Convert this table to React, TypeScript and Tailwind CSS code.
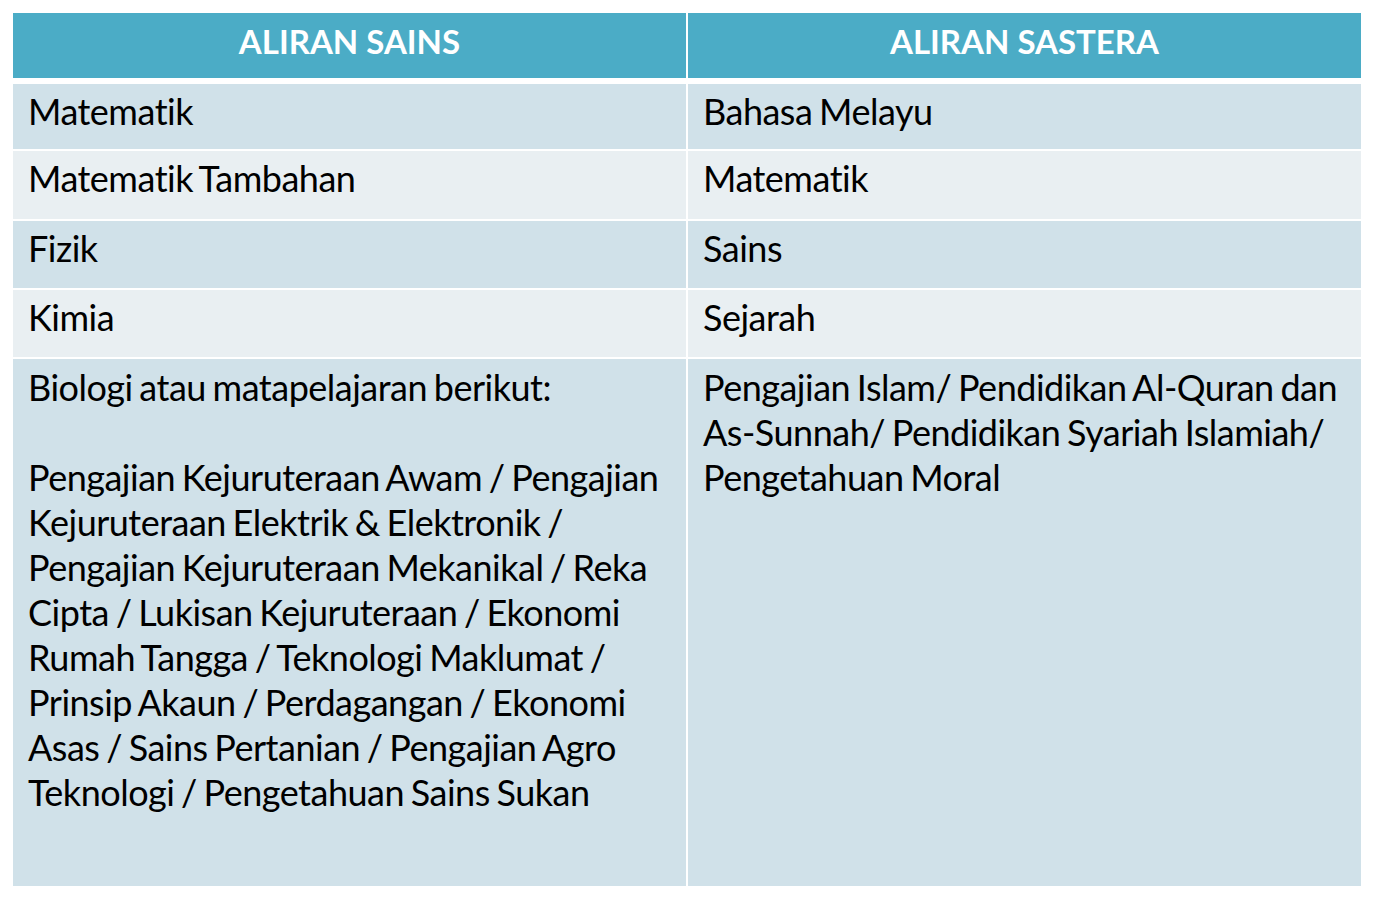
export default function App() {
  const sains = [
    "Matematik",
    "Matematik Tambahan",
    "Fizik",
    "Kimia",
  ]
  const sastera = ["Bahasa Melayu", "Matematik", "Sains", "Sejarah"]
  const rowHeights = ["h-[65px]", "h-[68px]", "h-[67px]", "h-[67px]"]
  const bands = ["bg-[#d0e1e9]", "bg-[#e9eff2]", "bg-[#d0e1e9]", "bg-[#e9eff2]"]

  const leftLong = [
    "Biologi atau matapelajaran berikut:",
    "",
    "Pengajian Kejuruteraan Awam / Pengajian",
    "Kejuruteraan Elektrik & Elektronik /",
    "Pengajian Kejuruteraan Mekanikal / Reka",
    "Cipta / Lukisan Kejuruteraan / Ekonomi",
    "Rumah Tangga / Teknologi Maklumat /",
    "Prinsip Akaun / Perdagangan / Ekonomi",
    "Asas / Sains Pertanian / Pengajian Agro",
    "Teknologi / Pengetahuan Sains Sukan",
  ]
  const rightLong = [
    "Pengajian Islam/ Pendidikan Al-Quran dan",
    "As-Sunnah/ Pendidikan Syariah Islamiah/",
    "Pengetahuan Moral",
  ]

  return (
    <div className="min-h-screen bg-white font-['Lato',sans-serif] text-black">
      <div className="pt-[13px] pl-[13px] w-[1361px]">
        {/* header */}
        <div className="grid grid-cols-[673px_673px] gap-x-[2px] h-[65px] text-[33px] font-bold text-white leading-none">
          <div className="bg-[#4bacc6] flex items-center justify-center pb-[8px]">ALIRAN SAINS</div>
          <div className="bg-[#4bacc6] flex items-center justify-center pb-[8px]">ALIRAN SASTERA</div>
        </div>

        <div className="mt-[6px] flex flex-col gap-y-[2px] text-[36px] leading-[45px] tracking-[-0.5px] [word-spacing:-2px]">
          {sains.map((s, i) => (
            <div key={s} className={`grid grid-cols-[673px_673px] gap-x-[2px] ${rowHeights[i]}`}>
              <div className={`${bands[i]} pl-[15px] pt-[5px] whitespace-nowrap`}>{s}</div>
              <div className={`${bands[i]} pl-[15px] pt-[5px] whitespace-nowrap`}>{sastera[i]}</div>
            </div>
          ))}

          <div className="grid grid-cols-[673px_673px] gap-x-[2px] h-[527px]">
            <div className="bg-[#d0e1e9] pl-[15px] pt-[6px]">
              {leftLong.map((l, i) => (
                <div key={i} className="h-[45px] whitespace-nowrap">{l}</div>
              ))}
            </div>
            <div className="bg-[#d0e1e9] pl-[15px] pt-[6px]">
              {rightLong.map((l, i) => (
                <div key={i} className="h-[45px] whitespace-nowrap">{l}</div>
              ))}
            </div>
          </div>
        </div>
      </div>
    </div>
  )
}
